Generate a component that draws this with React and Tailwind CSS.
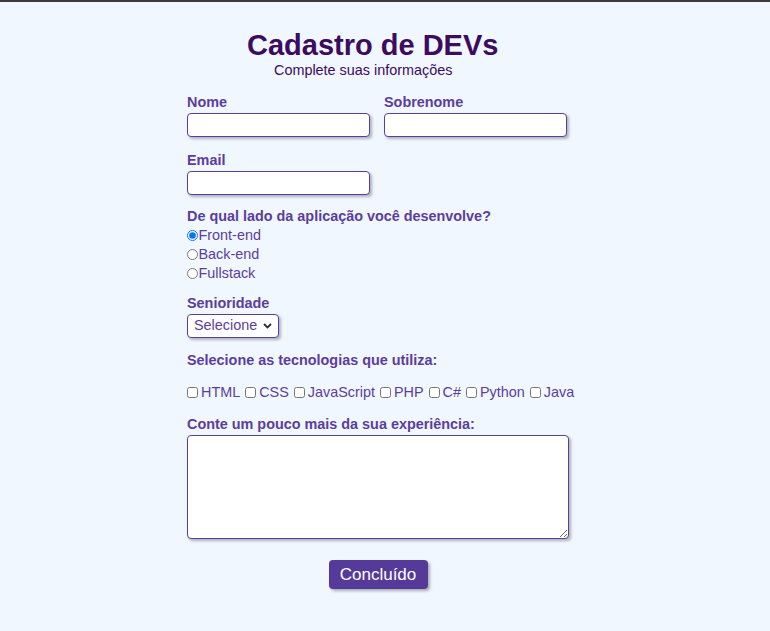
import React from "react";

const techs = ["HTML", "CSS", "JavaScript", "PHP", "C#", "Python", "Java"];
const sides = ["Front-end", "Back-end", "Fullstack"];

const labelCls = "block text-[14.4px] leading-[17px] font-bold text-[#5b3e9c]";
const fieldCls =
  "block h-[24px] rounded-[4px] border border-[#5a3e9e] bg-white shadow-[2px_2px_3px_rgba(0,0,0,0.28)] outline-none px-1";

export default function App() {
  return (
    <div
      className="min-h-[631px] bg-[#f0f7ff] text-[#5b3e9c]"
      style={{ fontFamily: '"Liberation Sans", Arial, sans-serif' }}
    >
      <div className="h-[2px] bg-[#3c3c3c]" />
      <div className="ml-[187px] w-[382px] pt-[27px]">
        <h1 className="pl-[60px] text-[29px] leading-[33px] font-bold text-[#3b0c5f]">
          Cadastro de DEVs
        </h1>
        <p className="pl-[87px] text-[14.4px] leading-[17px] text-[#3b0c5f]">
          Complete suas informações
        </p>

        <div className="mt-[15px] flex gap-[14px]">
          <div>
            <label className={labelCls}>Nome</label>
            <input type="text" className={`${fieldCls} mt-[2px] w-[183px]`} />
          </div>
          <div>
            <label className={labelCls}>Sobrenome</label>
            <input type="text" className={`${fieldCls} mt-[2px] w-[183px]`} />
          </div>
        </div>

        <div className="mt-[15px]">
          <label className={labelCls}>Email</label>
          <input type="email" className={`${fieldCls} mt-[2px] w-[183px]`} />
        </div>

        <div className="mt-[13px]">
          <span className={labelCls}>De qual lado da aplicação você desenvolve?</span>
          <div className="mt-[1px]">
            {sides.map((s, i) => (
              <label key={s} className="flex h-[19px] items-center text-[14.4px] text-[#5b3e9c]">
                <input
                  type="radio"
                  name="lado"
                  defaultChecked={i === 0}
                  className="m-0 h-[11px] w-[11px]"
                />
                <span className="ml-[0.5px]">{s}</span>
              </label>
            ))}
          </div>
        </div>

        <div className="mt-[12px]">
          <label className={labelCls}>Senioridade</label>
          <div className="relative mt-[2px] w-[92px]">
            <select
              className="block h-[24px] w-[92px] appearance-none rounded-[4px] border border-[#5a3e9e] bg-white pl-[6px] text-[14.4px] text-[#5b3e9c] shadow-[2px_2px_3px_rgba(0,0,0,0.28)] outline-none"
              defaultValue=""
            >
              <option value="">Selecione</option>
              <option>Júnior</option>
              <option>Pleno</option>
              <option>Sênior</option>
            </select>
            <svg
              className="pointer-events-none absolute left-[76px] top-[9px]"
              width="9"
              height="6"
              viewBox="0 0 9 6"
            >
              <polyline points="1,1 4.5,4.5 8,1" fill="none" stroke="#2d2d3a" strokeWidth="1.8" />
            </svg>
          </div>
        </div>

        <div className="mt-[14px]">
          <span className={labelCls}>Selecione as tecnologias que utiliza:</span>
          <div className="mt-[15px] flex h-[17px] items-center text-[14.4px] text-[#5b3e9c]">
            {techs.map((t) => (
              <label key={t} className="flex items-center">
                <input type="checkbox" className="m-0 h-[11px] w-[11px]" />
                <span className="ml-[3px] mr-[5px]">{t}</span>
              </label>
            ))}
          </div>
        </div>

        <div className="mt-[15px]">
          <label className={labelCls}>Conte um pouco mais da sua experiência:</label>
          <textarea
            className="mt-[2px] block h-[104px] w-[382px] rounded-[4px] border border-[#5a3e9e] bg-white shadow-[2px_2px_3px_rgba(0,0,0,0.28)] outline-none"
          />
        </div>

        <button
          type="button"
          className="mx-auto mt-[21px] block h-[29px] w-[99px] rounded-[4px] bg-[#553a99] text-[17px] text-white shadow-[2px_2px_3px_rgba(0,0,0,0.3)]"
        >
          Concluído
        </button>
      </div>
    </div>
  );
}
